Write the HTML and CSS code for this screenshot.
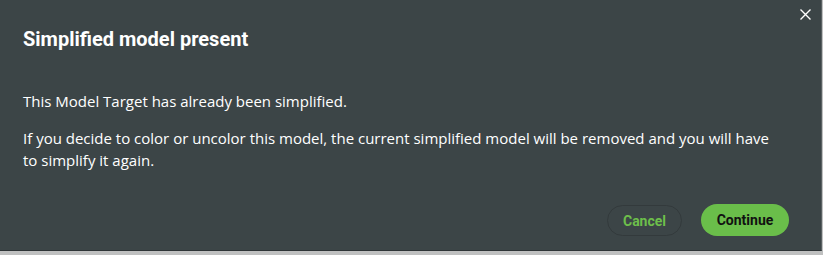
FILE: index.html
```html
<!DOCTYPE html>
<html>
<head>
<meta charset="utf-8">
<link rel="stylesheet" href="styles.css">
</head>
<body>
<div class="dialog">
  <button class="close" aria-label="Close">
    <svg width="11" height="11" viewBox="0 0 11 11"><path d="M0.5 0.5L10.5 10.5M10.5 0.5L0.5 10.5" stroke="#ffffff" stroke-width="1.4" fill="none"/></svg>
  </button>
  <h1 class="title">Simplified model present</h1>
  <div class="content">
    <p>This Model Target has already been simplified.</p>
    <p>If you decide to color or uncolor this model, the current simplified model will be removed and you will have to simplify it again.</p>
  </div>
  <div class="actions">
    <button class="btn btn-cancel">Cancel</button>
    <button class="btn btn-continue">Continue</button>
  </div>
</div>
</body>
</html>
```
FILE: styles.css
```css
html, body {
  margin: 0;
  padding: 0;
}
body {
  width: 823px;
  height: 255px;
  background: #bfc0c0;
  overflow: hidden;
}
.dialog {
  position: relative;
  box-sizing: border-box;
  width: 822px;
  height: 251px;
  background: #3c4547;
  border-right: 1px solid #5a6163;
  border-bottom: 1px solid #2e3436;
  padding: 27px 23px 0 23px;
  display: flex;
  flex-direction: column;
}
.close {
  position: absolute;
  top: 8px;
  right: 9px;
  width: 13px;
  height: 13px;
  padding: 1px;
  border: 0;
  background: transparent;
  display: flex;
  align-items: center;
  justify-content: center;
}
.title {
  margin: 0;
  font-family: Roboto, "Liberation Sans", sans-serif;
  font-weight: 700;
  font-size: 20px;
  line-height: 24px;
  color: #ffffff;
}
.content {
  margin-top: 39px;
  max-width: 762px;
  font-family: "Open Sans", "Noto Sans", sans-serif;
  font-size: 15px;
  line-height: 22px;
  color: #ffffff;
}
.content p {
  margin: 0 0 15px 0;
}
.actions {
  margin-top: auto;
  margin-bottom: 14px;
  display: flex;
  justify-content: flex-end;
  gap: 19px;
  padding-right: 9px;
}
.btn {
  font-family: Roboto, "Liberation Sans", sans-serif;
  font-weight: 700;
  font-size: 14px;
  height: 32px;
  border-radius: 16px;
  padding: 0 12px;
  box-sizing: border-box;
}
.btn-cancel {
  background: transparent;
  border: 1px solid #333a3c;
  color: #6dbf4b;
  width: 75px;
  height: 31px;
  margin-top: 1px;
}
.btn-continue {
  background: #6abe4a;
  border: 0;
  color: #111111;
  width: 88px;
}
```
